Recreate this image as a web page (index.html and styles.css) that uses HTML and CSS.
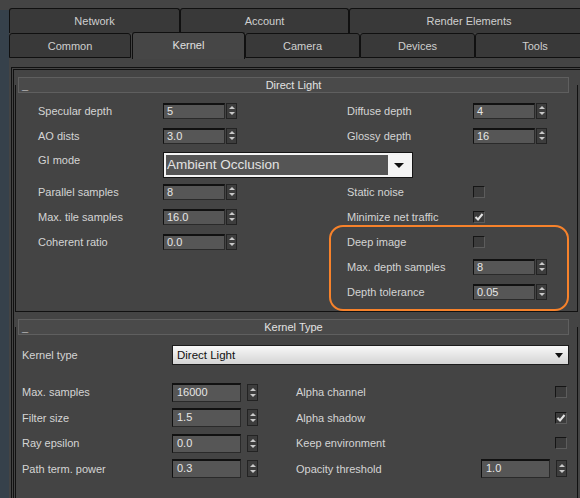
FILE: index.html
```html
<!DOCTYPE html>
<html lang="en">
<head>
    <meta charset="UTF-8">
    <title>Render Setup - Kernel</title>
    <link rel="stylesheet" href="styles.css">
</head>
<body>
    <div class="strip"></div>
    <main class="app">
        <div class="tab-row top">
            <div class="tab" style="width:171px">Network</div>
            <div class="tab" style="width:169px">Account</div>
            <div class="tab" style="width:240px">Render Elements</div>
        </div>
        <div class="tab-row">
            <div class="tab" style="width:122px">Common</div>
            <div class="tab active" style="width:113px">Kernel</div>
            <div class="tab" style="width:115px">Camera</div>
            <div class="tab" style="width:115px">Devices</div>
            <div class="tab" style="width:120px">Tools</div>
        </div>

        <div class="page">
            <div class="page-inner">

                <section class="rollout">
                    <div class="rollout-head"><span class="min">_</span><span class="title">Direct Light</span></div>
                    <div class="rollout-body dl-grid">
                        <span class="lbl">Specular depth</span>
                        <div class="spin"><div class="field">5</div><div class="arrows"></div></div>
                        <span class="lbl">Diffuse depth</span>
                        <div class="spin"><div class="field">4</div><div class="arrows"></div></div>

                        <span class="lbl">AO dists</span>
                        <div class="spin"><div class="field">3.0</div><div class="arrows"></div></div>
                        <span class="lbl">Glossy depth</span>
                        <div class="spin"><div class="field">16</div><div class="arrows"></div></div>

                        <span class="lbl top">GI mode</span>
                        <div class="gi-select"><span class="gi-text">Ambient Occlusion</span><span class="gi-btn"><i class="tri"></i></span></div>

                        <span class="lbl">Parallel samples</span>
                        <div class="spin"><div class="field">8</div><div class="arrows"></div></div>
                        <span class="lbl">Static noise</span>
                        <div class="check"></div>

                        <span class="lbl">Max. tile samples</span>
                        <div class="spin"><div class="field">16.0</div><div class="arrows"></div></div>
                        <span class="lbl">Minimize net traffic</span>
                        <div class="check on"><svg width="10" height="10" viewBox="0 0 10 10"><path d="M1.5 5 L4 7.5 L8.5 2" fill="none" stroke="#e4e4e4" stroke-width="2"/></svg></div>

                        <span class="lbl">Coherent ratio</span>
                        <div class="spin"><div class="field">0.0</div><div class="arrows"></div></div>
                        <span class="lbl">Deep image</span>
                        <div class="check"></div>

                        <span class="lbl skip">Max. depth samples</span>
                        <div class="spin"><div class="field">8</div><div class="arrows"></div></div>

                        <span class="lbl skip">Depth tolerance</span>
                        <div class="spin"><div class="field">0.05</div><div class="arrows"></div></div>
                    </div>
                </section>

                <section class="rollout">
                    <div class="rollout-head"><span class="min">_</span><span class="title">Kernel Type</span></div>
                    <div class="rollout-body kt-body">
                        <div class="kt-type">
                            <span class="lbl">Kernel type</span>
                            <div class="k-select"><span>Direct Light</span><i class="tri"></i></div>
                        </div>
                        <div class="kt-grid">
                            <span class="lbl">Max. samples</span>
                            <div class="spin big"><div class="field">16000</div><div class="arrows"></div></div>
                            <span class="lbl">Alpha channel</span>
                            <div class="check"></div>

                            <span class="lbl">Filter size</span>
                            <div class="spin big"><div class="field">1.5</div><div class="arrows"></div></div>
                            <span class="lbl">Alpha shadow</span>
                            <div class="check on"><svg width="10" height="10" viewBox="0 0 10 10"><path d="M1.5 5 L4 7.5 L8.5 2" fill="none" stroke="#e4e4e4" stroke-width="2"/></svg></div>

                            <span class="lbl">Ray epsilon</span>
                            <div class="spin big"><div class="field">0.0</div><div class="arrows"></div></div>
                            <span class="lbl">Keep environment</span>
                            <div class="check"></div>

                            <span class="lbl">Path term. power</span>
                            <div class="spin big"><div class="field">0.3</div><div class="arrows"></div></div>
                            <span class="lbl">Opacity threshold</span>
                            <div class="spin big"><div class="field">1.0</div><div class="arrows"></div></div>
                        </div>
                    </div>
                </section>

            </div>
        </div>
    </main>
    <div class="highlight"></div>
</body>
</html>
```

FILE: styles.css
```css
html, body {
    margin: 0;
    height: 100%;
}
body {
    background-color: #444;
    font-family: "Liberation Sans", Arial, sans-serif;
    font-size: 11px;
    color: #d4d4d4;
    display: flex;
    overflow: hidden;
    position: relative;
}
.strip {
    width: 9px;
    flex: none;
    margin-top: 10px;
    background-color: #36414b;
}
.app {
    flex: none;
    width: 600px;
    padding-top: 8px;
}

/* tabs */
.tab-row {
    display: flex;
    height: 25px;
}
.tab {
    box-sizing: border-box;
    flex: none;
    height: 25px;
    background-color: #393939;
    border: 1px solid #101010;
    border-radius: 3px 3px 0 0;
    display: flex;
    align-items: center;
    justify-content: center;
    color: #cfcfcf;
}
.tab-row.top .tab {
    border-bottom: none;
}
.tab.active {
    height: 27px;
    margin-top: -1px;
    margin-left: 1px;
    background-color: #464646;
    border-bottom: none;
    color: #e0e0e0;
    padding-bottom: 2px;
}

/* page frame */
.page {
    margin: 9px 0 0 2px;
    border-top: 1px solid #111;
    border-left: 1px solid #111;
    padding: 1px 0 0 1px;
}
.page-inner {
    border-top: 1px solid #111;
    border-left: 1px solid #111;
    padding: 7px 0 0 1px;
}

/* rollouts */
.rollout {
    width: 563px;
    margin-bottom: 7px;
}
.rollout-head {
    position: relative;
    z-index: 1;
    box-sizing: border-box;
    height: 16px;
    margin: 0 9px 0 3px;
    background-color: #4a4a4a;
    border: 1px solid #5f5f5f;
    display: grid;
    grid-template-columns: 20px 1fr 20px;
    align-items: center;
    line-height: 14px;
}
.rollout-head .min {
    padding-left: 3px;
    color: #f0f0f0;
    font-weight: bold;
}
.rollout-head .title {
    text-align: center;
    color: #e2e2e2;
}
.rollout-body {
    margin-top: -8px;
    border: 1px solid #111;
    border-top: none;
}

.lbl {
    align-self: center;
    white-space: nowrap;
}
.lbl.top {
    align-self: start;
    padding-top: 6px;
}

/* Direct Light */
.dl-grid {
    display: grid;
    grid-template-columns: 125px 184px 126px auto;
    grid-template-rows: 25px 25px 31px repeat(5, 25px);
    padding: 13px 0 7px 22px;
}
.lbl.skip {
    grid-column: 3;
}

/* spinner */
.spin {
    display: flex;
    align-items: center;
    align-self: center;
    gap: 1px;
}
.field {
    box-sizing: border-box;
    width: 62px;
    height: 16px;
    background-color: #565656;
    border-top: 2px solid #111;
    border-left: 1px solid #111;
    border-right: 1px solid #2a2a2a;
    border-bottom: 1px solid #2a2a2a;
    color: #e6e6e6;
    padding-left: 3px;
    line-height: 13px;
}
.arrows {
    box-sizing: border-box;
    width: 11px;
    height: 16px;
    background-color: #3d3d3d;
    border: 1px solid #232323;
    display: flex;
    flex-direction: column;
    align-items: center;
    justify-content: center;
    gap: 3px;
}
.arrows::before,
.arrows::after {
    content: "";
    width: 0;
    height: 0;
    border-left: 3px solid transparent;
    border-right: 3px solid transparent;
}
.arrows::before {
    border-bottom: 3px solid #c9c9c9;
}
.arrows::after {
    border-top: 3px solid #c9c9c9;
}
.spin.big {
    gap: 6px;
}
.spin.big .field {
    width: 69px;
    height: 19px;
    line-height: 15px;
    padding-left: 4px;
}
.spin.big .arrows {
    height: 17px;
}

/* checkbox */
.check {
    box-sizing: border-box;
    align-self: center;
    width: 12px;
    height: 12px;
    background-color: #3c3c3c;
    border-top: 1px solid #151515;
    border-left: 1px solid #151515;
    border-right: 1px solid #5c5c5c;
    border-bottom: 1px solid #5c5c5c;
    display: flex;
    align-items: center;
    justify-content: center;
}

/* dropdowns */
.tri {
    display: block;
    width: 0;
    height: 0;
    border-left: 5px solid transparent;
    border-right: 5px solid transparent;
    border-top: 5px solid #111;
}
.gi-select {
    grid-column: 2 / -1;
    box-sizing: border-box;
    width: 248px;
    height: 24px;
    margin-top: 5px;
    margin-left: 1px;
    border: 2px solid #f4f4f4;
    box-shadow: 0 0 0 1px #151515;
    background-color: #555;
    display: flex;
}
.gi-text {
    flex: 1;
    font-size: 13.5px;
    line-height: 19px;
    color: #e2e2e2;
    padding-left: 1px;
}
.gi-btn {
    width: 22px;
    background-color: #f4f4f4;
    display: flex;
    align-items: center;
    justify-content: center;
}

.kt-body {
    padding: 16px 10px 20px 6px;
}
.kt-type {
    display: grid;
    grid-template-columns: 150px auto;
    height: 24px;
    margin-bottom: 12.5px;
}
.k-select {
    box-sizing: border-box;
    align-self: center;
    width: 397px;
    height: 20px;
    border: 1px solid #1c1c1c;
    background: linear-gradient(#f8f8f8, #d4d4d4);
    color: #111;
    font-size: 11.5px;
    display: flex;
    align-items: center;
    justify-content: space-between;
    padding: 0 5px 0 4px;
}
.k-select .tri {
    border-left-width: 4px;
    border-right-width: 4px;
    border-top-width: 5px;
}
.kt-grid {
    display: grid;
    grid-template-columns: 150px 124px 1fr auto;
    grid-auto-rows: 25.5px;
}
.kt-grid .check {
    justify-self: end;
}

/* annotation */
.highlight {
    position: absolute;
    left: 329px;
    top: 225px;
    width: 236px;
    height: 82px;
    border: 2px solid #f7822b;
    border-radius: 14px;
}
```
